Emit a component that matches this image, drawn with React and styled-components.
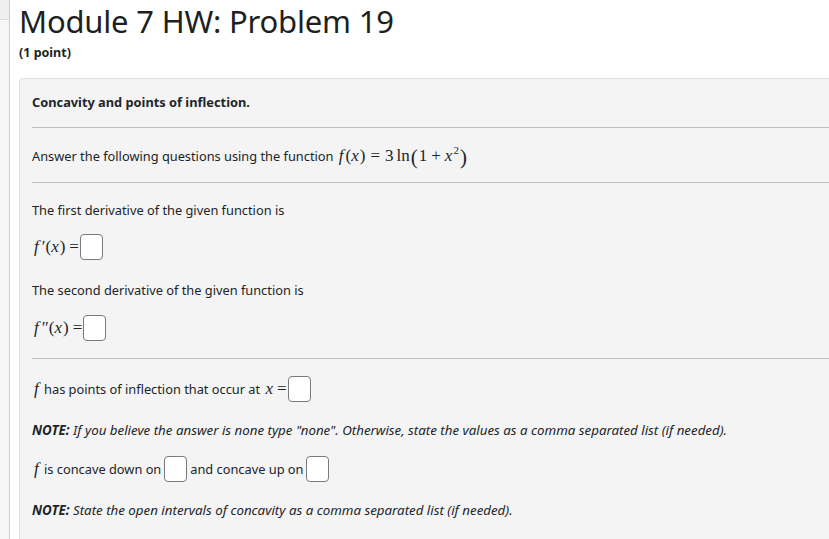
import React from 'react';
import styled, { createGlobalStyle } from 'styled-components';

const GlobalStyle = createGlobalStyle`
  html, body {
    margin: 0;
    padding: 0;
    background: #ffffff;
    overflow: hidden;
  }
  body {
    font-family: "Noto Sans", "Open Sans", sans-serif;
    color: #212529;
  }
`;

const Page = styled.div`
  display: flex;
  height: 539px;
  overflow: hidden;
`;

const Rail = styled.div`
  width: 9px;
  flex: 0 0 9px;
  background: #f6f6f6;
  border-right: 1px solid #cfcfcf;
`;

const RailTab = styled.div`
  height: 19px;
  border-bottom: 1px solid #dcdcdc;
  background: #efefef;
`;

const Main = styled.div`
  flex: 1;
  padding-left: 9px;
  min-width: 0;
`;

const Title = styled.h1`
  margin: 0;
  padding-top: 2px;
  font-size: 31px;
  font-weight: 400;
  line-height: 38px;
  color: #1d1f21;
  letter-spacing: -0.2px;
`;

const Points = styled.div`
  margin-top: 5px;
  font-size: 12.5px;
  font-weight: 700;
  line-height: 16px;
  color: #1d1f21;
`;

const Panel = styled.div`
  margin-top: 17px;
  width: 840px;
  background: #f4f4f4;
  border: 1px solid #e0e0e0;
  border-right: none;
  border-radius: 4px 0 0 0;
  padding: 0 0 40px 12px;
  font-size: 12.8px;
  color: #212529;
`;

const Rule = styled.hr`
  margin: ${p => p.$t || 0}px 0 0 0;
  border: none;
  border-top: 1px solid #bdbdbd;
`;

const Line = styled.div`
  display: flex;
  align-items: center;
  height: 26px;
  margin-top: ${p => p.$t || 0}px;
  white-space: nowrap;
  font-weight: ${p => (p.$bold ? 700 : 400)};
`;

const Note = styled(Line)`
  font-style: italic;
  font-size: 13.3px;
  b {
    font-weight: 700;
  }
`;

const M = styled.span`
  font-family: "Liberation Serif", "DejaVu Serif", serif;
  font-size: 17px;
  font-style: ${p => (p.$i ? 'italic' : 'normal')};
  margin: 0 ${p => p.$r || 0}px 0 ${p => p.$l || 0}px;
`;

const BigParen = styled.span`
  font-family: "Liberation Serif", serif;
  font-size: 21px;
  position: relative;
  top: 1px;
  margin: 0 1px;
`;

const Sup = styled.span`
  font-family: "Liberation Serif", serif;
  font-size: 11px;
  position: relative;
  top: -6px;
  margin-left: 1px;
`;

const AnswerBox = styled.span`
  display: inline-block;
  width: 21px;
  height: 24px;
  background: #ffffff;
  border: 1px solid #7a7a7a;
  border-radius: 4px;
  margin: 0 ${p => p.$r || 0}px 0 ${p => p.$l || 0}px;
`;

const App = () => (
  <Page>
    <GlobalStyle />
    <Rail>
      <RailTab />
    </Rail>
    <Main>
      <Title>Module 7 HW: Problem 19</Title>
      <Points>(1 point)</Points>
      <Panel>
        <Line $t={10} $bold>Concavity and points of inflection.</Line>
        <Rule $t={12} />
        <Line $t={15}>
          Answer the following questions using the function&nbsp;
          <M $i $r={2} $l={2}>f</M>
          <M>(</M>
          <M $i $r={1}>x</M>
          <M>)</M>
          <M $l={5} $r={5}>=</M>
          <M $r={3}>3</M>
          <M>ln</M>
          <BigParen>(</BigParen>
          <M>1</M>
          <M $l={4} $r={4}>+</M>
          <M $i>x</M>
          <Sup>2</Sup>
          <BigParen>)</BigParen>
        </Line>
        <Rule $t={13} />
        <Line $t={14}>The first derivative of the given function is</Line>
        <Line $t={11}>
          <M $i $l={2} $r={3}>f</M>
          <M>′(</M>
          <M $i $r={1}>x</M>
          <M>)</M>
          <M $l={4} $r={1}>=</M>
          <AnswerBox />
        </Line>
        <Line $t={17}>The second derivative of the given function is</Line>
        <Line $t={12}>
          <M $i $l={2} $r={3}>f</M>
          <M>″(</M>
          <M $i $r={1}>x</M>
          <M>)</M>
          <M $l={4} $r={1}>=</M>
          <AnswerBox />
        </Line>
        <Rule $t={17} />
        <Line $t={17}>
          <M $i $l={2} $r={2}>f</M>
          &nbsp;has points of inflection that occur at&nbsp;
          <M $i $l={2}>x</M>
          <M $l={4} $r={1}>=</M>
          <AnswerBox />
        </Line>
        <Note $t={15}>
          <b>NOTE:</b>&nbsp;If you believe the answer is none type "none". Otherwise, state the values as a comma separated list (if needed).
        </Note>
        <Line $t={13}>
          <M $i $l={2} $r={2}>f</M>
          &nbsp;is concave down on
          <AnswerBox $l={3} $r={3} />
          and concave up on
          <AnswerBox $l={3} />
        </Line>
        <Note $t={15}>
          <b>NOTE:</b>&nbsp;State the open intervals of concavity as a comma separated list (if needed).
        </Note>
      </Panel>
    </Main>
  </Page>
);

export default App;
